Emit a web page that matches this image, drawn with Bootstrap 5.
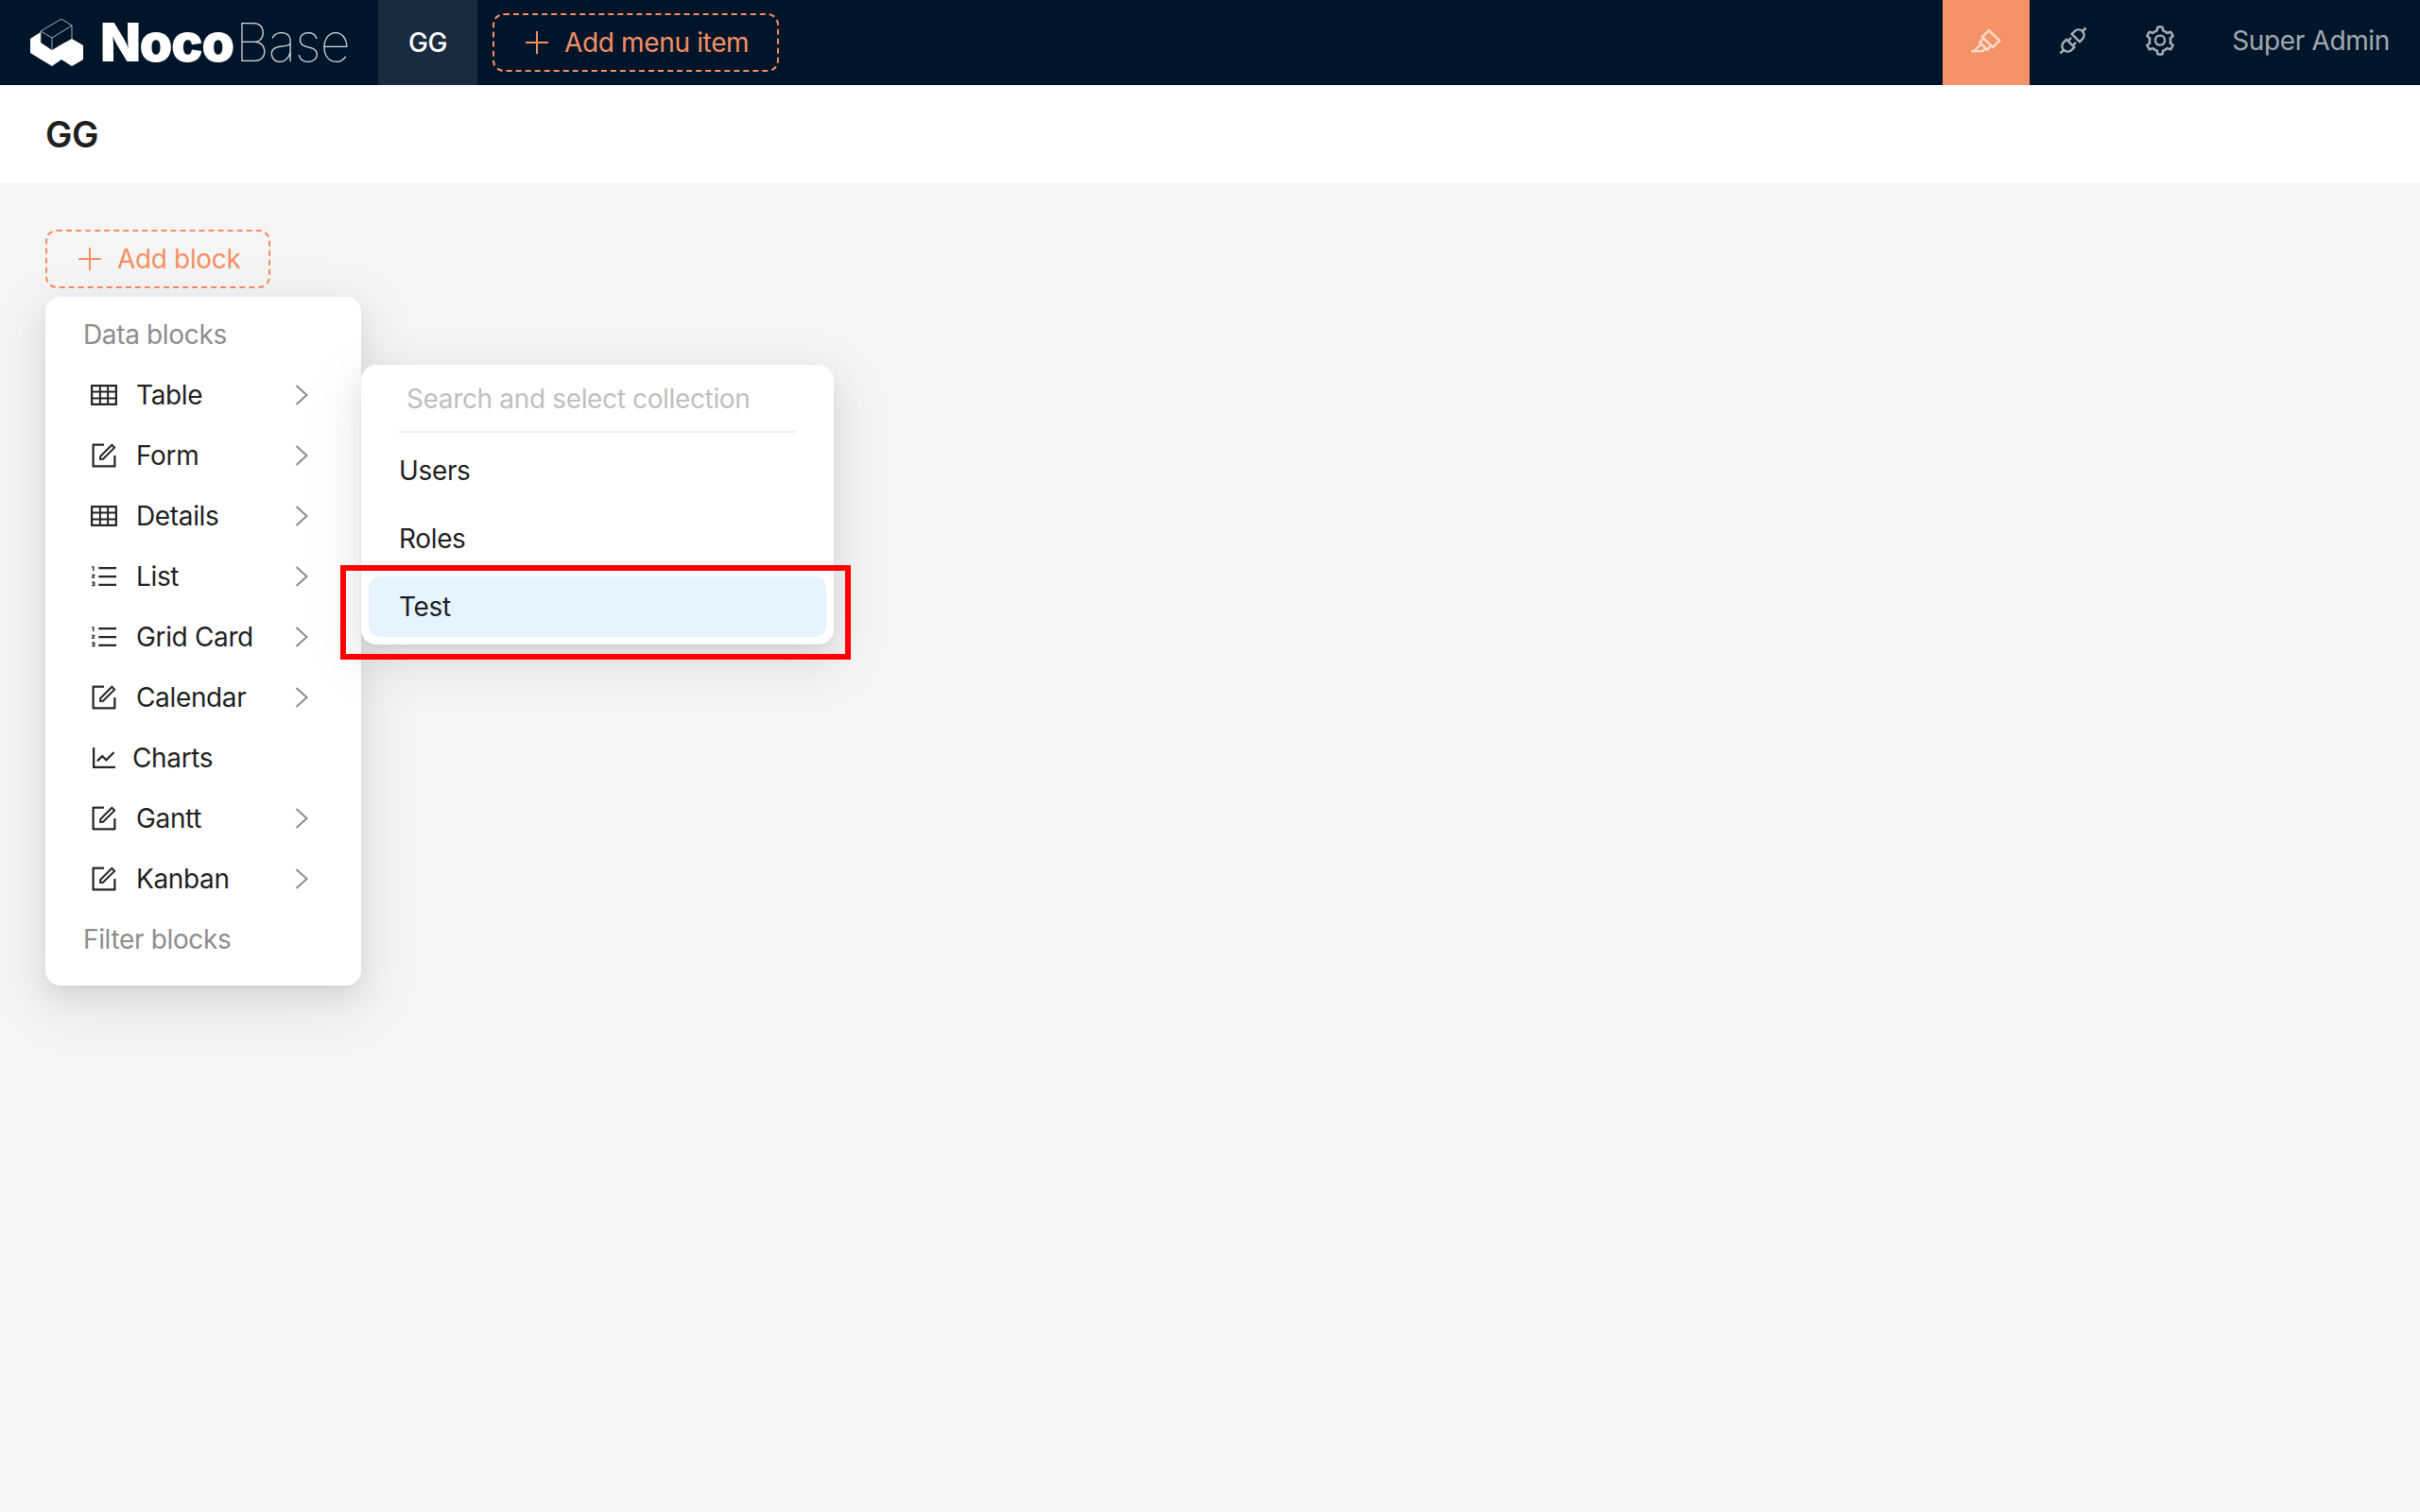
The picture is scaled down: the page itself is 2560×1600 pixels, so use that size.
<!DOCTYPE html>
<html lang="en">
<head>
    <meta charset="UTF-8">
    <meta name="viewport" content="width=device-width, initial-scale=1.0">
    <title>NocoBase</title>
    <link href="https://cdn.jsdelivr.net/npm/bootstrap@5.3.0/dist/css/bootstrap.min.css" rel="stylesheet">
    <style>
        body { font-family: Inter, "Liberation Sans", sans-serif; font-size: 28px; letter-spacing: -.35px; background: #f5f5f5; color: #1f1f1f; min-height: 1600px; }
        .top-bar { height: 90px; background: #001529; }
        .brand { width: 400px; height: 90px; padding-left: 32px; }
        .brand-mark { width: 56px; height: 50px; margin-right: 18px; }
        .brand-noco { font-size: 56px; font-weight: 900; color: #fff; letter-spacing: -1.5px; line-height: 1; }
        .brand-base { font-size: 56px; font-weight: 100; color: #d5d8dc; letter-spacing: -1px; line-height: 1; margin-left: 2px; }
        .nav-current { width: 105px; height: 90px; background: #1a2b40; color: #fff; font-weight: 500; }
        .dash-btn { height: 62px; border: 2px dashed #f58f64; border-radius: 12px; color: #f58f64; font-size: 28px; letter-spacing: -.35px; line-height: 1; padding: 0 30px 0 32px; background: transparent; }
        .dash-btn:hover { color: #f58f64; border-color: #f58f64; }
        .dash-btn svg { width: 26px; height: 26px; margin-right: 16px; }
        .nav-btn { width: 92px; height: 90px; padding-bottom: 5px; color: rgba(255,255,255,.65); }
        .nav-btn svg { width: 36px; height: 36px; fill: currentColor; }
        .nav-btn-on { background: #f59267; }
        .user-name { color: rgba(255,255,255,.65); padding: 0 32px 4px 30px; }
        .page-title { height: 104px; background: #fff; padding-left: 48px; font-size: 38px; font-weight: 600; color: #1f1f1f; }
        .page-body { padding: 49px 48px; position: relative; }
        .pop-menu { position: absolute; background: #fff; border-radius: 16px; box-shadow: 0 12px 32px 0 rgba(0,0,0,.08), 0 6px 12px -8px rgba(0,0,0,.12), 0 18px 56px 16px rgba(0,0,0,.05); }
        .block-menu { left: 48px; top: 120px; width: 334px; height: 729px; padding: 8px; }
        .group-name { height: 64px; padding-left: 32px; color: #8c8c8c; }
        .block-row { height: 64px; padding-left: 38px; padding-right: 48px; }
        .block-row svg.ic { width: 32px; height: 32px; fill: #262626; margin-right: 18px; flex: none; }
        .block-row svg.ic-chart { margin-right: 14px; }
        .block-row svg.arrow { width: 14px; height: 22px; margin-left: auto; fill: none; stroke: #8c8c8c; stroke-width: 2; }
        .coll-menu { left: 382px; top: 192px; width: 500px; height: 296px; padding: 8px; }
        .coll-search { height: 64px; margin: 0 32px 4px; padding-left: 8px; color: #bfbfbf; padding-bottom: 6px; border-bottom: 2px solid #f0f0f0; width: 420px; }
        .coll-row { height: 72px; padding-left: 32px; color: #1f1f1f; }
        .coll-row-on { height: 64px; margin-top: 4px; background: #e6f4ff; border-radius: 12px; }
        .red-frame { position: absolute; left: 360px; top: 404px; width: 540px; height: 100px; border: 6px solid #fe0000; }
    </style>
</head>
<body>

    <!-- Header -->
    <div class="top-bar d-flex align-items-center">
        <div class="brand d-flex align-items-center">
            <svg class="brand-mark" viewBox="0 0 56 50">
                <polygon fill="#fff" points="0,21 11,14 11,25 23,33 33,27 44,21 56,28 56,43 44,50 33,43 23,50 0,36"/>
                <path fill="none" stroke="#aab0b8" stroke-width="1" d="M11 13 33 0 44 7 23 20ZM23 20V33M44 7V21M11 13V25"/>
            </svg>
            <span class="brand-noco">Noco</span><span class="brand-base">Base</span>
        </div>
        <div class="nav-current d-flex align-items-center justify-content-center">GG</div>
        <button type="button" class="btn dash-btn d-flex align-items-center ms-3">
            <svg viewBox="0 0 26 26"><path d="M13 1V25M1 13H25" stroke="currentColor" stroke-width="2" fill="none"/></svg>
            Add menu item
        </button>
        <div class="d-flex align-items-center ms-auto">
            <div class="nav-btn nav-btn-on d-flex align-items-center justify-content-center">
                <svg viewBox="0 0 1024 1024"><path d="M957.6 507.4L603.2 158.2a7.9 7.9 0 00-11.2 0L353.3 393.4a8.03 8.03 0 00-.1 11.3l.1.1 40 39.4-117.2 115.3a8.03 8.03 0 00-.1 11.3l.1.1 39.5 38.9-189.1 187H72.1c-4.4 0-8.1 3.6-8.1 8V860c0 4.4 3.6 8 8 8h344.9c2.1 0 4.1-.8 5.6-2.3l76.1-75.6 40.4 39.8a7.9 7.9 0 0011.2 0l117.1-115.6 40.1 39.5a7.9 7.9 0 0011.2 0l238.7-235.2c3.4-3 3.4-8 .3-11.2zM389.8 796.2H229.6l134.4-133 80.1 78.9-54.3 54.1zm154.8-62.1L373.2 565.2l68.6-67.6 171.4 168.9-68.6 67.6zM713.1 658L450.3 399.1 597.6 254l262.8 259-147.3 145z"/></svg>
            </div>
            <div class="nav-btn d-flex align-items-center justify-content-center">
                <svg viewBox="0 0 1024 1024"><path d="M917.7 148.8l-42.4-42.4c-1.6-1.6-3.6-2.3-5.7-2.3s-4.1.8-5.7 2.3l-76.1 76.1a199.27 199.27 0 00-112.1-34.3c-51.2 0-102.4 19.5-141.5 58.6L432.3 308.7a8.03 8.03 0 000 11.3L704 591.7c1.6 1.6 3.6 2.3 5.7 2.3 2 0 4.1-.8 5.7-2.3l101.9-101.9c68.9-69 77-175.7 24.3-253.5l76.1-76.1c3.1-3.2 3.1-8.3 0-11.4zM769.1 441.7l-59.4 59.4-186.8-186.8 59.4-59.4c24.9-24.9 58.1-38.7 93.4-38.7 35.3 0 68.4 13.7 93.4 38.7 24.9 24.9 38.7 58.1 38.7 93.4 0 35.3-13.8 68.4-38.7 93.4zm-190.2 105a8.03 8.03 0 00-11.3 0L501 613.3 410.7 523l66.7-66.7c3.1-3.1 3.1-8.2 0-11.3L441 408.6a8.03 8.03 0 00-11.3 0L363 475.3l-43-43a7.85 7.85 0 00-5.7-2.3c-2 0-4.1.8-5.7 2.3L206.8 534.2c-68.9 69-77 175.7-24.3 253.5l-76.1 76.1a8.03 8.03 0 000 11.3l42.4 42.4c1.6 1.6 3.6 2.3 5.7 2.3s4.1-.8 5.7-2.3l76.1-76.1c33.7 22.9 72.9 34.3 112.1 34.3 51.2 0 102.4-19.5 141.5-58.6l101.9-101.9c3.1-3.1 3.1-8.2 0-11.3l-43-43 66.7-66.7c3.1-3.1 3.1-8.2 0-11.3l-36.6-36.2zM441.7 769.1a131.32 131.32 0 01-93.4 38.7c-35.3 0-68.4-13.7-93.4-38.7a131.32 131.32 0 01-38.7-93.4c0-35.3 13.7-68.4 38.7-93.4l59.4-59.4 186.8 186.8-59.4 59.4z"/></svg>
            </div>
            <div class="nav-btn d-flex align-items-center justify-content-center">
                <svg viewBox="0 0 1024 1024"><path d="M924.8 625.7l-65.5-56c3.1-19 4.7-38.4 4.7-57.8s-1.6-38.8-4.7-57.8l65.5-56a32.03 32.03 0 009.3-35.2l-.9-2.6a443.74 443.74 0 00-79.7-137.9l-1.8-2.1a32.12 32.12 0 00-35.1-9.5l-81.3 28.9c-30-24.6-63.5-44-99.7-57.6l-15.7-85a32.05 32.05 0 00-25.8-25.7l-2.7-.5c-52.1-9.4-106.9-9.4-159 0l-2.7.5a32.05 32.05 0 00-25.8 25.7l-15.8 85.4a351.86 351.86 0 00-99 57.4l-81.9-29.1a32 32 0 00-35.1 9.5l-1.8 2.1a446.02 446.02 0 00-79.7 137.9l-.9 2.6c-4.5 12.5-.8 26.5 9.3 35.2l66.3 56.6c-3.1 18.8-4.6 38-4.6 57.1 0 19.2 1.5 38.4 4.6 57.1L99 625.5a32.03 32.03 0 00-9.3 35.2l.9 2.6c18.1 50.4 44.9 96.9 79.7 137.9l1.8 2.1a32.12 32.12 0 0035.1 9.5l81.9-29.1c29.8 24.5 63.1 43.9 99 57.4l15.8 85.4a32.05 32.05 0 0025.8 25.7l2.7.5a449.4 449.4 0 00159 0l2.7-.5a32.05 32.05 0 0025.8-25.7l15.7-85a350 350 0 0099.7-57.6l81.3 28.9a32 32 0 0035.1-9.5l1.8-2.1c34.8-41.1 61.6-87.5 79.7-137.9l.9-2.6c4.5-12.3.8-26.3-9.3-35zM788.3 465.9c2.5 15.1 3.8 30.6 3.8 46.1s-1.3 31-3.8 46.1l-6.6 40.1 74.7 63.9a370.03 370.03 0 01-42.6 73.6L721 702.8l-31.4 25.8c-23.9 19.6-50.5 35-79.3 45.8l-38.1 14.3-17.9 97a377.5 377.5 0 01-85 0l-17.9-97.2-37.8-14.5c-28.5-10.8-55-26.2-78.7-45.7l-31.4-25.9-93.4 33.2c-17-22.9-31.2-47.6-42.6-73.6l75.5-64.5-6.5-40c-2.4-14.9-3.7-30.3-3.7-45.5 0-15.3 1.2-30.6 3.7-45.5l6.5-40-75.5-64.5c11.3-26.1 25.6-50.7 42.6-73.6l93.4 33.2 31.4-25.9c23.7-19.5 50.2-34.9 78.7-45.7l37.9-14.3 17.9-97.2c28.1-3.2 56.8-3.2 85 0l17.9 97 38.1 14.3c28.7 10.8 55.4 26.2 79.3 45.8l31.4 25.8 92.8-32.9c17 22.9 31.2 47.6 42.6 73.6L781.8 426l6.5 39.9zM512 326c-97.2 0-176 78.8-176 176s78.8 176 176 176 176-78.8 176-176-78.8-176-176-176zm79.2 255.2A111.6 111.6 0 01512 614c-29.9 0-58-11.7-79.2-32.8A111.6 111.6 0 01400 502c0-29.9 11.7-58 32.8-79.2C454 401.6 482.1 390 512 390c29.9 0 58 11.6 79.2 32.8A111.6 111.6 0 01624 502c0 29.9-11.7 58-32.8 79.2z"/></svg>
            </div>
            <div class="user-name">Super Admin</div>
        </div>
    </div>

    <!-- Page title -->
    <div class="page-title d-flex align-items-center">GG</div>

    <!-- Page body -->
    <div class="page-body">
        <button type="button" class="btn dash-btn d-inline-flex align-items-center">
            <svg viewBox="0 0 26 26"><path d="M13 1V25M1 13H25" stroke="currentColor" stroke-width="2" fill="none"/></svg>
            Add block
        </button>

        <div class="pop-menu block-menu" id="blockMenu">
            <div class="group-name d-flex align-items-center">Data blocks</div>
            <div id="blockRows"></div>
            <div class="group-name d-flex align-items-center">Filter blocks</div>
        </div>

        <div class="pop-menu coll-menu">
            <div class="coll-search d-flex align-items-center">Search and select collection</div>
            <div class="coll-row d-flex align-items-center">Users</div>
            <div class="coll-row d-flex align-items-center">Roles</div>
            <div class="coll-row coll-row-on d-flex align-items-center">Test</div>
        </div>

        <div class="red-frame"></div>
    </div>

    <script>
        // icon paths for the block menu
        const icons = {
            table: '<path d="M928 160H96c-17.7 0-32 14.3-32 32v640c0 17.7 14.3 32 32 32h832c17.7 0 32-14.3 32-32V192c0-17.7-14.3-32-32-32zm-40 208H676V232h212v136zm0 224H676V432h212v160zM412 432h200v160H412V432zm200-64H412V232h200v136zm-476 64h212v160H136V432zm0-200h212v136H136V232zm0 424h212v136H136V656zm276 0h200v136H412V656zm476 136H676V656h212v136z"/>',
            form: '<path d="M904 512h-56c-4.4 0-8 3.6-8 8v320H184V184h320c4.4 0 8-3.6 8-8v-56c0-4.4-3.6-8-8-8H144c-17.7 0-32 14.3-32 32v736c0 17.7 14.3 32 32 32h736c17.7 0 32-14.3 32-32V520c0-4.4-3.6-8-8-8z"/><path d="M355.9 534.9L354 653.8c-.1 8.9 7.1 16.2 16 16.2h.4l118-2.9c2-.1 4-.9 5.4-2.3l415.9-415c3.1-3.1 3.1-8.2 0-11.3L785.4 114.3c-1.6-1.6-3.6-2.3-5.7-2.3s-4.1.8-5.7 2.3l-415.8 415a8.3 8.3 0 00-2.3 5.6zm63.5 23.6L779.7 199l45.2 45.1-360.5 359.7-45.7 1.1.7-46.4z"/>',
            list: '<path d="M920 760H336c-4.4 0-8 3.6-8 8v56c0 4.4 3.6 8 8 8h584c4.4 0 8-3.6 8-8v-56c0-4.4-3.6-8-8-8zm0-568H336c-4.4 0-8 3.6-8 8v56c0 4.4 3.6 8 8 8h584c4.4 0 8-3.6 8-8v-56c0-4.4-3.6-8-8-8zm0 284H336c-4.4 0-8 3.6-8 8v56c0 4.4 3.6 8 8 8h584c4.4 0 8-3.6 8-8v-56c0-4.4-3.6-8-8-8z"/><path d="M104 170h70v160h-44V215h-26zM96 440h110v40l-60 52h60v34H96v-38l62-54H96zM96 690h110v150H96v-34h66v-24h-50v-34h50v-24H96z"/>',
            chart: '<path d="M888 792H200V168c0-4.4-3.6-8-8-8h-56c-4.4 0-8 3.6-8 8v688c0 4.4 3.6 8 8 8h752c4.4 0 8-3.6 8-8v-56c0-4.4-3.6-8-8-8zM305.8 637.7c3.1 3.1 8.1 3.1 11.3 0l138.3-137.6L583 628.5c3.1 3.1 8.2 3.1 11.3 0l275.4-275.3c3.1-3.1 3.1-8.2 0-11.3l-39.6-39.6a8.03 8.03 0 00-11.3 0l-230 229.9L461.4 404a8.03 8.03 0 00-11.3 0L266.3 586.7a8.03 8.03 0 000 11.3l39.5 39.7z"/>'
        };

        const blocks = [
            { name: 'Table', icon: 'table', more: true },
            { name: 'Form', icon: 'form', more: true },
            { name: 'Details', icon: 'table', more: true },
            { name: 'List', icon: 'list', more: true },
            { name: 'Grid Card', icon: 'list', more: true },
            { name: 'Calendar', icon: 'form', more: true },
            { name: 'Charts', icon: 'chart', more: false },
            { name: 'Gantt', icon: 'form', more: true },
            { name: 'Kanban', icon: 'form', more: true }
        ];

        const blockRows = document.getElementById('blockRows');
        blocks.forEach(b => {
            const row = document.createElement('div');
            row.className = 'block-row d-flex align-items-center';
            const cls = b.icon === 'chart' ? 'ic ic-chart' : 'ic';
            row.innerHTML = `<svg class="${cls}" viewBox="0 0 1024 1024">${icons[b.icon]}</svg><span>${b.name}</span>` +
                (b.more ? '<svg class="arrow" viewBox="0 0 14 22"><path d="M1.5 1 12.5 11 1.5 21"/></svg>' : '');
            blockRows.appendChild(row);
        });
    </script>

    <script src="https://cdn.jsdelivr.net/npm/bootstrap@5.3.0/dist/js/bootstrap.bundle.min.js"></script>
</body>
</html>
